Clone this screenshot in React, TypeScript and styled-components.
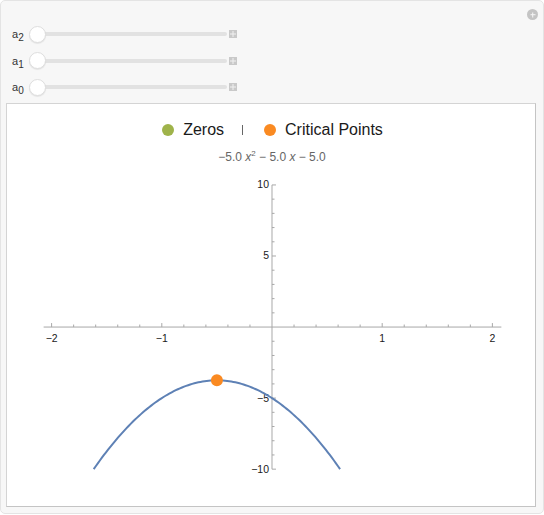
import styled, { createGlobalStyle } from "styled-components";

const GlobalStyle = createGlobalStyle`
  html, body {
    margin: 0;
    padding: 0;
    background: #ffffff;
  }
  body {
    font-family: "Liberation Sans", Arial, sans-serif;
  }
`;

const Panel = styled.div`
  box-sizing: border-box;
  width: 544px;
  height: 514px;
  padding: 0 7px 0 5px;
  background: #f7f7f7;
  border: 1px solid #e4e4e4;
  border-radius: 5px;
  display: flex;
  flex-direction: column;
`;

const TopBar = styled.div`
  height: 20px;
  display: flex;
  justify-content: flex-end;
  align-items: flex-end;
  margin-right: -2px;
`;

const AddButton = styled.div`
  width: 11px;
  height: 11px;
  border-radius: 50%;
  background: #c4c4c4;
  position: relative;
  margin-bottom: 1px;
  &::before,
  &::after {
    content: "";
    position: absolute;
    background: #f7f7f7;
    left: 50%;
    top: 50%;
    transform: translate(-50%, -50%);
  }
  &::before {
    width: 5px;
    height: 1.6px;
  }
  &::after {
    width: 1.6px;
    height: 5px;
  }
`;

const Controls = styled.div`
  display: flex;
  flex-direction: column;
`;

const Row = styled.div`
  height: 26.5px;
  display: flex;
  align-items: center;
  padding-left: 6px;
`;

const Label = styled.div`
  width: 17px;
  font-size: 11px;
  color: #333;
  font-family: "Liberation Sans", Arial, sans-serif;
  sub {
    font-size: 10px;
    vertical-align: -3px;
    line-height: 0;
  }
`;

const Slider = styled.div`
  position: relative;
  width: 198px;
  height: 18px;
  display: flex;
  align-items: center;
`;

const Track = styled.div`
  margin-left: 2px;
  flex: 1;
  height: 4px;
  border-radius: 2px;
  background: #e2e2e2;
`;

const Thumb = styled.div`
  position: absolute;
  left: 0;
  top: 0.5px;
  width: 17px;
  height: 17px;
  box-sizing: border-box;
  border-radius: 50%;
  background: #ffffff;
  border: 1px solid #dedede;
  box-shadow: 0 1px 1px rgba(0, 0, 0, 0.08);
`;

const StepButton = styled.div`
  margin-left: 2px;
  width: 8px;
  height: 8px;
  background: #c9c9c9;
  position: relative;
  &::before,
  &::after {
    content: "";
    position: absolute;
    background: #f2f2f2;
    left: 50%;
    top: 50%;
    transform: translate(-50%, -50%);
  }
  &::before {
    width: 6px;
    height: 1px;
  }
  &::after {
    width: 1px;
    height: 6px;
  }
`;

const PlotBox = styled.div`
  margin-top: 2px;
  width: 530px;
  height: 404px;
  box-sizing: border-box;
  background: #ffffff;
  border: 1px solid #d4d4d4;
  border-right-color: #c4c4c4;
  border-bottom-color: #c4c4c4;
  display: flex;
  flex-direction: column;
`;

const Legend = styled.div`
  margin-top: 17px;
  height: 20px;
  display: flex;
  justify-content: center;
  align-items: center;
  font-size: 16px;
  color: #1a1a1a;
  padding-left: 3px;
`;

const LegendItem = styled.div`
  display: flex;
  align-items: center;
  gap: 9px;
`;

const Dot = styled.span<{ $color: string }>`
  width: 12px;
  height: 12px;
  border-radius: 50%;
  background: ${(p) => p.$color};
`;

const Separator = styled.span`
  width: 1px;
  height: 10px;
  background: #666;
  margin: 0 21px 0 18px;
`;

const Formula = styled.div`
  margin-top: 9px;
  height: 16px;
  line-height: 16px;
  text-align: center;
  font-size: 12px;
  color: #666;
  padding-left: 2px;
  i {
    font-style: italic;
  }
  sup {
    font-size: 8px;
    vertical-align: 5px;
    line-height: 0;
  }
`;

const Chart = styled.svg`
  display: block;
  font-family: "Liberation Sans", Arial, sans-serif;
`;

const X0 = 265;
const Y0 = 162.5;
const SX = 110.5;
const SY = 14.25;
const X = (u: number) => X0 + SX * u;
const Y = (v: number) => Y0 - SY * v;

const f = (u: number) => -5 * u * u - 5 * u - 5;

function curvePath() {
  const a = (-1 - Math.sqrt(5)) / 2;
  const b = (-1 + Math.sqrt(5)) / 2;
  const pts: string[] = [];
  const n = 120;
  for (let i = 0; i <= n; i++) {
    const u = a + ((b - a) * i) / n;
    pts.push(`${X(u).toFixed(2)},${Y(f(u)).toFixed(2)}`);
  }
  return "M" + pts.join("L");
}

const axisColor = "#a8a8a8";

function Plot() {
  const xTicks: number[] = [];
  for (let i = -10; i <= 10; i++) if (i !== 0) xTicks.push(i);
  const yTicks: number[] = [];
  for (let i = -10; i <= 10; i++) if (i !== 0) yTicks.push(i);

  return (
    <Chart width={528} height={341} viewBox="0 0 528 341">
      <line x1={36} y1={Y0} x2={495} y2={Y0} stroke={axisColor} strokeWidth={1} />
      <line x1={X0} y1={Y(10)} x2={X0} y2={Y(-10)} stroke={axisColor} strokeWidth={1} />
      {xTicks.map((i) => {
        const major = i % 5 === 0;
        const u = i / 5;
        return (
          <line
            key={"xt" + i}
            x1={X(u)}
            x2={X(u)}
            y1={Y0}
            y2={Y0 - (major ? 4 : 2.5)}
            stroke={axisColor}
            strokeWidth={1}
          />
        );
      })}
      {yTicks.map((v) => {
        const major = v % 5 === 0;
        return (
          <line
            key={"yt" + v}
            x1={X0}
            x2={X0 + (major ? 4 : 2.5)}
            y1={Y(v)}
            y2={Y(v)}
            stroke={axisColor}
            strokeWidth={1}
          />
        );
      })}
      {[-2, -1, 1, 2].map((u) => (
        <text key={"xl" + u} x={X(u)} y={Y0 + 14.5} fontSize={10.5} fill="#1a1a1a" textAnchor="middle">
          {u < 0 ? `\u2212${-u}` : u}
        </text>
      ))}
      {[-10, -5, 5, 10].map((v) => (
        <text key={"yl" + v} x={X0 - 3} y={Y(v) + 3.5} fontSize={10.5} fill="#1a1a1a" textAnchor="end">
          {v < 0 ? `\u2212${-v}` : v}
        </text>
      ))}
      <path d={curvePath()} fill="none" stroke="#5e81b5" strokeWidth={2} />
      <circle cx={X(-0.5)} cy={Y(f(-0.5))} r={6} fill="#fa8a22" />
    </Chart>
  );
}

const params = ["2", "1", "0"];

export default function App() {
  return (
    <>
      <GlobalStyle />
      <Panel>
        <TopBar>
          <AddButton />
        </TopBar>
        <Controls>
          {params.map((p) => (
            <Row key={p}>
              <Label>
                a<sub>{p}</sub>
              </Label>
              <Slider>
                <Track />
                <Thumb />
              </Slider>
              <StepButton />
            </Row>
          ))}
        </Controls>
        <PlotBox>
          <Legend>
            <LegendItem>
              <Dot $color="#9fb34a" />
              Zeros
            </LegendItem>
            <Separator />
            <LegendItem>
              <Dot $color="#fa8a22" />
              Critical Points
            </LegendItem>
          </Legend>
          <Formula>
            {"\u22125.0 "}
            <i>x</i>
            <sup>2</sup>
            {" \u2212 5.0 "}
            <i>x</i>
            {" \u2212 5.0"}
          </Formula>
          <Plot />
        </PlotBox>
      </Panel>
    </>
  );
}
